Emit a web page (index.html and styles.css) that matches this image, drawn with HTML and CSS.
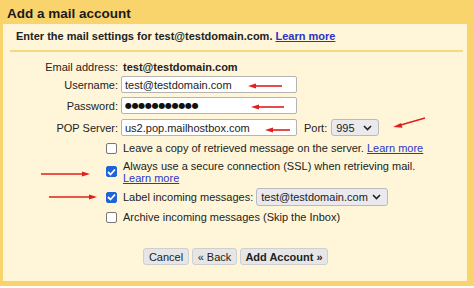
FILE: index.html
```html
<!DOCTYPE html>
<html lang="en">
<head>
    <meta charset="UTF-8">
    <meta name="viewport" content="width=device-width, initial-scale=1.0">
    <title>Add a mail account</title>
    <link rel="stylesheet" href="styles.css">
</head>
<body>

    <div class="frame">
        <div class="title">Add a mail account</div>

        <div class="panel">
            <div class="intro">Enter the mail settings for test@testdomain.com. <a href="#">Learn more</a></div>
            <div class="separator"></div>

            <!-- Account fields -->
            <div class="row row-email">
                <div class="label">Email address:</div>
                <div class="email-value">test@testdomain.com</div>
            </div>
            <div class="row row-user">
                <div class="label">Username:</div>
                <input class="text-input" type="text" value="test@testdomain.com">
            </div>
            <div class="row row-pass">
                <div class="label">Password:</div>
                <input class="text-input pass-input" type="text" value="●●●●●●●●●●●">
            </div>
            <div class="row row-pop">
                <div class="label">POP Server:</div>
                <input class="text-input" type="text" value="us2.pop.mailhostbox.com">
                <div class="port-label">Port:</div>
                <div class="select port-select">995
                    <svg class="chevron" width="9" height="6" viewBox="0 0 9 6"><path d="M1 1 L4.5 4.5 L8 1" fill="none" stroke="#222" stroke-width="1.6"/></svg>
                </div>
            </div>

            <!-- Options -->
            <div class="check-row cb-leave">
                <span class="box"></span>
                <div class="check-text">Leave a copy of retrieved message on the server. <a href="#">Learn more</a></div>
            </div>
            <div class="check-row cb-ssl">
                <span class="box checked"><svg width="9" height="8" viewBox="0 0 9 8"><path d="M1 4 L3.5 6.5 L8 1.5" fill="none" stroke="#fff" stroke-width="1.8"/></svg></span>
                <div class="check-text">Always use a secure connection (SSL) when retrieving mail.<br><a href="#">Learn more</a></div>
            </div>
            <div class="check-row cb-label">
                <span class="box checked"><svg width="9" height="8" viewBox="0 0 9 8"><path d="M1 4 L3.5 6.5 L8 1.5" fill="none" stroke="#fff" stroke-width="1.8"/></svg></span>
                <div class="check-text">Label incoming messages:</div>
                <div class="select label-select">test@testdomain.com
                    <svg class="chevron" width="9" height="6" viewBox="0 0 9 6"><path d="M1 1 L4.5 4.5 L8 1" fill="none" stroke="#222" stroke-width="1.6"/></svg>
                </div>
            </div>
            <div class="check-row cb-archive">
                <span class="box"></span>
                <div class="check-text">Archive incoming messages (Skip the Inbox)</div>
            </div>

            <!-- Buttons -->
            <div class="buttons">
                <button class="btn btn-cancel">Cancel</button>
                <button class="btn btn-back">« Back</button>
                <button class="btn btn-add">Add Account »</button>
            </div>
        </div>

        <!-- Red annotation arrows drawn over the form -->
        <svg class="arrows" width="474" height="288" viewBox="0 0 474 288">
            <g stroke="#e0201b" stroke-width="1.6" fill="#e0201b">
                <line x1="254" y1="86" x2="282" y2="86"/>
                <polygon points="248,86 256,83.5 256,88.5" stroke="none"/>
                <line x1="257" y1="107" x2="284" y2="107"/>
                <polygon points="251,107 259,104.5 259,109.5" stroke="none"/>
                <line x1="271" y1="130" x2="290" y2="130"/>
                <polygon points="265,130 273,127.5 273,132.5" stroke="none"/>
                <line x1="399" y1="125.5" x2="425" y2="118"/>
                <polygon points="393,127 401,123 402.5,127.8" stroke="none"/>
                <line x1="41" y1="174" x2="84" y2="174"/>
                <polygon points="90,174 82,171.5 82,176.5" stroke="none"/>
                <line x1="49" y1="197" x2="91" y2="197"/>
                <polygon points="97,197 89,194.5 89,199.5" stroke="none"/>
            </g>
        </svg>
    </div>

</body>
</html>
```

FILE: styles.css
```css
/* Page reset */
body {
    margin: 0;
    background-color: #ffffff;
    font-family: "Liberation Sans", Arial, sans-serif;
    color: #222;
}

/* Yellow outer frame */
.frame {
    position: relative;
    width: 474px;
    height: 286px;
    background-color: #f9d36c;
    padding: 0 7px 0 3px;
    box-sizing: border-box;
}

.title {
    height: 24px;
    line-height: 28px;
    padding-left: 4px;
    font-size: 13.5px;
    font-weight: bold;
    color: #1a1a1a;
}

/* Cream inner panel */
.panel {
    height: 257px;
    background-color: #fff6d9;
    font-size: 11px;
}

.intro {
    padding: 5px 0 0 13px;
    line-height: 14px;
    font-weight: bold;
}

a {
    color: #2a36c8;
    text-decoration: underline;
}

.intro a {
    color: #2a33c4;
}

.separator {
    height: 2px;
    margin: 7px 4px 0 7px;
    background-color: #f8d97c;
}

/* Label + field rows */
.row {
    display: flex;
    align-items: center;
}

.label {
    width: 115px;
    text-align: right;
    flex-shrink: 0;
    margin-right: 3px;
}

.row-email {
    height: 18px;
    margin-top: 6px;
}

.email-value {
    font-weight: bold;
    margin-left: 2px;
}

.row-user {
    height: 17px;
}

.row-pass {
    height: 17px;
    margin-top: 4px;
}

.row-pop {
    height: 17px;
    margin-top: 5px;
}

.text-input {
    width: 176px;
    height: 17px;
    box-sizing: border-box;
    border: 1px solid #b4b4b4;
    border-radius: 2px;
    padding: 0 3px;
    font-family: "Liberation Sans", Arial, sans-serif;
    font-size: 11px;
    color: #222;
    background-color: #fff;
    outline: none;
}

/* Password shown as bullets */
.pass-input {
    font-family: "DejaVu Sans", sans-serif;
    font-size: 8px;
    letter-spacing: -0.3px;
    color: #111;
}

.port-label {
    margin-left: 7px;
}

/* Grey dropdowns */
.select {
    display: flex;
    align-items: center;
    justify-content: space-between;
    box-sizing: border-box;
    height: 17px;
    border: 1px solid #b9b9c2;
    border-radius: 3px;
    background-color: #e9e9ee;
    padding: 0 6px 0 4px;
    font-size: 11px;
}

.port-select {
    width: 48px;
    margin-left: 4px;
}

.label-select {
    width: 132px;
    height: 18px;
    margin-left: 3px;
}

/* Checkbox rows */
.check-row {
    display: flex;
    align-items: center;
    padding-left: 103px;
    line-height: 14px;
}

.box {
    width: 11px;
    height: 11px;
    box-sizing: border-box;
    border: 1px solid #777;
    border-radius: 2px;
    background-color: #fff;
    margin-right: 6px;
    flex-shrink: 0;
    display: flex;
    align-items: center;
    justify-content: center;
}

.box.checked {
    background-color: #1d64d8;
    border-color: #1d64d8;
}

.cb-leave {
    margin-top: 5px;
}

.cb-ssl {
    margin-top: 5px;
    line-height: 12px;
    align-items: flex-start;
}

.cb-ssl .box {
    margin-top: 6px;
}

.cb-label {
    margin-top: 4px;
    height: 18px;
}

.cb-archive {
    margin-top: 4px;
}

/* Bottom buttons */
.buttons {
    display: flex;
    gap: 3px;
    padding-left: 140px;
    margin-top: 24px;
}

.btn {
    height: 17px;
    box-sizing: border-box;
    padding: 0 4px;
    border: 1px solid #cfcfcf;
    border-radius: 3px;
    background-color: #e6e6e6;
    font-family: "Liberation Sans", Arial, sans-serif;
    font-size: 11px;
    color: #222;
}

.btn-cancel {
    width: 46px;
}

.btn-back {
    width: 45px;
}

.btn-add {
    width: 88px;
    font-weight: bold;
}

/* Annotation layer */
.arrows {
    position: absolute;
    left: 0;
    top: 0;
    pointer-events: none;
}
```
